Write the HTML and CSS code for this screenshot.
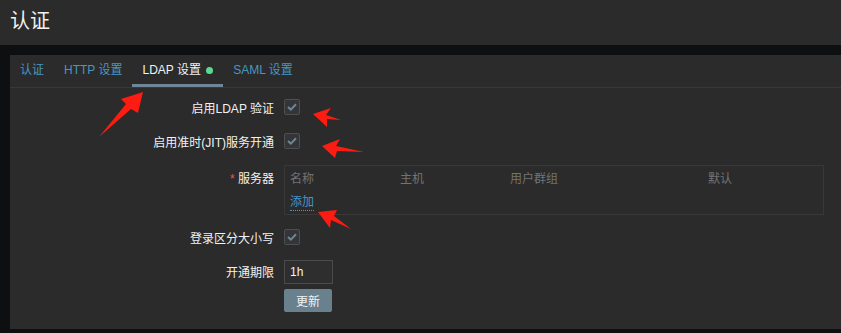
FILE: index.html
```html
<!DOCTYPE html>
<html lang="zh-CN">
<head>
  <meta charset="UTF-8">
  <meta name="viewport" content="width=device-width, initial-scale=1.0">
  <title>认证</title>
  <link rel="stylesheet" href="styles.css">
</head>
<body>
  <header class="page-header">
    <h1>认证</h1>
  </header>

  <main class="wrapper">
    <div class="panel">
      <!-- Tabs -->
      <ul class="tabs">
        <li class="tab">认证</li>
        <li class="tab">HTTP 设置</li>
        <li class="tab active">LDAP 设置 <span class="dot"></span></li>
        <li class="tab">SAML 设置</li>
      </ul>

      <!-- LDAP form -->
      <div class="form">
        <div class="row">
          <label class="label">启用LDAP 验证</label>
          <div class="field"><span class="check"><svg width="10" height="8" viewBox="0 0 10 8"><path d="M1 4 L3.8 6.6 L9 1.2" fill="none" stroke="#6f8795" stroke-width="2"/></svg></span></div>
        </div>
        <div class="row">
          <label class="label">启用准时(JIT)服务开通</label>
          <div class="field"><span class="check"><svg width="10" height="8" viewBox="0 0 10 8"><path d="M1 4 L3.8 6.6 L9 1.2" fill="none" stroke="#6f8795" stroke-width="2"/></svg></span></div>
        </div>
        <div class="row row-table">
          <label class="label"><span class="req">*</span> 服务器</label>
          <div class="field">
            <div class="servers">
              <div class="servers-head">
                <span>名称</span>
                <span>主机</span>
                <span>用户群组</span>
                <span>默认</span>
              </div>
              <div class="servers-add"><a class="link">添加</a></div>
            </div>
          </div>
        </div>
        <div class="row">
          <label class="label">登录区分大小写</label>
          <div class="field"><span class="check"><svg width="10" height="8" viewBox="0 0 10 8"><path d="M1 4 L3.8 6.6 L9 1.2" fill="none" stroke="#6f8795" stroke-width="2"/></svg></span></div>
        </div>
        <div class="row row-tight">
          <label class="label">开通期限</label>
          <div class="field"><input class="text-input" type="text" value="1h"></div>
        </div>
        <div class="row">
          <div class="label"></div>
          <div class="field"><button class="btn">更新</button></div>
        </div>
      </div>
    </div>
  </main>

  <!-- red annotation arrows -->
  <svg class="marks" width="841" height="333" viewBox="0 0 841 333">
    <g fill="#fd1c11">
      <polygon points="99,137 126,104 121,99 143,92 138,113 131,109"/>
      <polygon points="313,114 331,108 326,115 341,120 327,119 327,127"/>
      <polygon points="322,146 340,139 336,146 364,152 337,151 335,158"/>
      <polygon points="318,212 337,210 334,216 351,229 331,220 330,228"/>
    </g>
  </svg>
</body>
</html>
```

FILE: styles.css
```css
* {
  margin: 0;
  padding: 0;
  box-sizing: border-box;
}

body {
  font-family: "Liberation Sans", "Noto Sans CJK SC", sans-serif;
  font-size: 12px;
  color: #f2f2f2;
  background: #0e0f11;
  overflow: hidden;
  position: relative;
  height: 333px;
}

/* Horní lišta s nadpisem */
.page-header {
  height: 45px;
  background: #2b2b2b;
  padding: 0 10px;
}

.page-header h1 {
  font-size: 20px;
  font-weight: normal;
  line-height: 43px;
  color: #f2f2f2;
}

.wrapper {
  padding: 10px 0 0 10px;
}

.panel {
  background: #2b2b2b;
  height: 274px;
}

/* Záložky */
.tabs {
  display: flex;
  list-style: none;
  height: 33px;
  border-bottom: 1px solid #383838;
}

.tab {
  padding: 0 10px;
  line-height: 30px;
  height: 32px;
  color: #4796c4;
  border-bottom: 3px solid transparent;
}

.tab.active {
  color: #f2f2f2;
  border-bottom-color: #6e8695;
}

.dot {
  display: inline-block;
  width: 7px;
  height: 7px;
  border-radius: 50%;
  background: #59db8f;
  margin-left: 2px;
  vertical-align: 0;
}

/* Formulář */
.form {
  padding-top: 7px;
}

.row {
  display: grid;
  grid-template-columns: 264px 1fr;
  column-gap: 10px;
  align-items: center;
  min-height: 24px;
  margin-bottom: 10px;
}

.row-tight {
  margin-bottom: 4px;
}

.row-table {
  align-items: start;
}

.row-table .label {
  padding-top: 4px;
  line-height: 24px;
}

.row-table .field {
  padding-top: 2px;
}

.label {
  text-align: right;
  color: #f2f2f2;
}

.req {
  color: #e45959;
}

.check {
  display: flex;
  align-items: center;
  justify-content: center;
  width: 16px;
  height: 16px;
  border: 1px solid #4f4f4f;
  background: #333538;
  border-radius: 2px;
}

/* Tabulka serverů */
.servers {
  width: 540px;
  border: 1px solid #383838;
  padding: 1px 5px 3px;
}

.servers-head {
  display: grid;
  grid-template-columns: 110px 110px 198px 1fr;
  height: 24px;
  line-height: 24px;
  color: #737373;
}

.servers-add {
  height: 20px;
  line-height: 22px;
}

.link {
  color: #4796c4;
  border-bottom: 1px dotted #4796c4;
  padding-bottom: 1px;
}

.text-input {
  width: 49px;
  height: 24px;
  margin-top: 1px;
  background: #2e2e2e;
  border: 1px solid #4b4b4b;
  color: #f2f2f2;
  font-family: inherit;
  font-size: 12px;
  padding: 0 5px;
  outline: none;
}

.btn {
  width: 48px;
  height: 23px;
  background: #69808d;
  color: #f2f2f2;
  border: none;
  border-radius: 2px;
  font-family: inherit;
  font-size: 12px;
}

/* Červené šipky přes obsah */
.marks {
  position: absolute;
  top: 0;
  left: 0;
  pointer-events: none;
}
```
